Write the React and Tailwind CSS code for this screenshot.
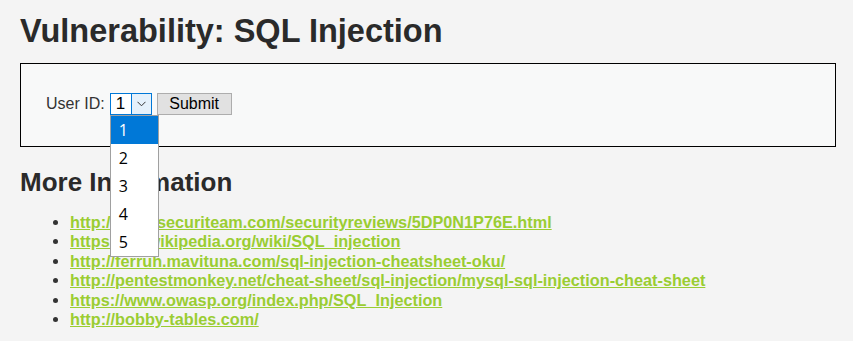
export default function App() {
  const links = [
    "http://www.securiteam.com/securityreviews/5DP0N1P76E.html",
    "https://en.wikipedia.org/wiki/SQL_injection",
    "http://ferruh.mavituna.com/sql-injection-cheatsheet-oku/",
    "http://pentestmonkey.net/cheat-sheet/sql-injection/mysql-sql-injection-cheat-sheet",
    "https://www.owasp.org/index.php/SQL_Injection",
    "http://bobby-tables.com/",
  ];
  return (
    <div className="min-h-[341px] bg-[#f4f4f4] px-[20px] pt-[13px] text-[#333]" style={{ fontFamily: '"Liberation Sans", Arial, sans-serif' }}>
      <h1 className="text-[32.5px] font-bold leading-[37px] text-[#2a2a2a]">Vulnerability: SQL Injection</h1>
      <div className="mt-[13px] w-[816px] border border-black bg-[#f8f9f9] pt-[29px] pb-[31px] pl-[25px]">
        <div className="flex items-center text-[16px] leading-[18px]">
          <span className="mr-[5px] text-[#333]">User ID:</span>
          <div className="relative">
            <div className="flex h-[22px] w-[42px] border border-[#0078d7] bg-white">
              <div className="flex flex-1 items-center pl-[5px] text-[17px] text-black">1</div>
              <div className="flex w-[20px] items-center justify-center border-l border-[#0078d7] bg-[#e5f1fb]">
                <svg width="9" height="6" viewBox="0 0 9 6"><path d="M0.5 0.8 L4.5 4.8 L8.5 0.8" fill="none" stroke="#333" strokeWidth="1" /></svg>
              </div>
            </div>
            <div className="absolute left-0 top-[22px] z-10 w-[49px] border border-[#a0a0a0] bg-white text-black" style={{ fontFamily: '"Open Sans", "Noto Sans", sans-serif' }}>
              {[1, 2, 3, 4, 5].map((n) => (
                <div key={n} className={"flex h-[28px] items-center pl-[8px] text-[16px] " + (n === 1 ? "bg-[#0078d7] text-white" : "")}>{n}</div>
              ))}
            </div>
          </div>
          <button className="ml-[5px] h-[22px] w-[75px] border border-[#adadad] bg-[#e1e1e1] text-[16px] leading-[18px] text-black">Submit</button>
        </div>
      </div>
      <h2 className="mt-[20px] text-[26px] font-bold leading-[30px] text-[#2a2a2a]">More Information</h2>
      <ul className="mt-[16px] list-disc pl-[50px] text-[16.25px] leading-[19.4px] marker:text-[#333]">
        {links.map((l) => (
          <li key={l}>
            <a href="#" className="font-bold text-[#9acd32] underline decoration-[#9acd32]">{l}</a>
          </li>
        ))}
      </ul>
    </div>
  );
}
